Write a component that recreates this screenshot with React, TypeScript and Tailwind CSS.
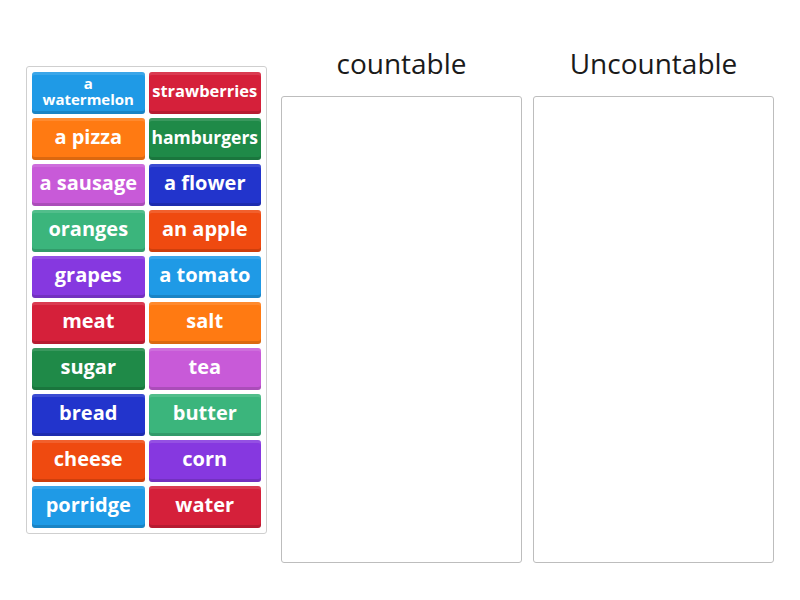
import React from "react";

type Tile = { t: string; c: string; s?: string };

const C = {
  blue: "bg-[#1f9ae6]",
  red: "bg-[#d5203a]",
  orange: "bg-[#ff7a12]",
  green: "bg-[#1f8a48]",
  pink: "bg-[#c85ad8]",
  navy: "bg-[#2234cc]",
  teal: "bg-[#3bb57c]",
  orangeRed: "bg-[#ef4a10]",
  purple: "bg-[#8638e0]",
};

const tiles: Tile[] = [
  { t: "a\nwatermelon", c: C.blue, s: "text-[15px] leading-[16px] whitespace-pre-line" },
  { t: "strawberries", c: C.red, s: "text-[16.5px] leading-[20px]" },
  { t: "a pizza", c: C.orange },
  { t: "hamburgers", c: C.green, s: "text-[17.5px] leading-[20px]" },
  { t: "a sausage", c: C.pink },
  { t: "a flower", c: C.navy },
  { t: "oranges", c: C.teal },
  { t: "an apple", c: C.orangeRed },
  { t: "grapes", c: C.purple },
  { t: "a tomato", c: C.blue },
  { t: "meat", c: C.red },
  { t: "salt", c: C.orange },
  { t: "sugar", c: C.green },
  { t: "tea", c: C.pink },
  { t: "bread", c: C.navy },
  { t: "butter", c: C.teal },
  { t: "cheese", c: C.orangeRed },
  { t: "corn", c: C.purple },
  { t: "porridge", c: C.blue },
  { t: "water", c: C.red },
];

export default function App() {
  return (
    <div
      className="w-[800px] h-[600px] bg-white flex items-start"
      style={{ fontFamily: '"Open Sans", "Noto Sans", sans-serif' }}
    >
      <div className="ml-[26px] mt-[66px] w-[241px] h-[468px] border border-[#cfcfcf] rounded-[3px] p-[5px]">
        <div className="grid grid-cols-2 gap-[4px]">
          {tiles.map((x) => (
            <div
              key={x.t}
              className={`${x.c} h-[42px] pb-[4px] rounded-[3px] flex items-center justify-center text-center text-white font-bold shadow-[inset_0_-3px_0_rgba(0,0,0,0.14),inset_0_3px_0_rgba(255,255,255,0.12)] ${x.s ?? "text-[20px] leading-[24px]"}`}
            >
              {x.t}
            </div>
          ))}
        </div>
      </div>
      <div className="ml-[14px] mt-[39px] flex gap-[11px]">
        {["countable", "Uncountable"].map((h) => (
          <div key={h} className="w-[241px] flex flex-col">
            <div className="h-[48px] flex items-center justify-center text-[28px] text-[#1a1a1a]">
              {h}
            </div>
            <div className="mt-[9px] h-[467px] border border-[#bdbdbd] rounded-[3px]" />
          </div>
        ))}
      </div>
    </div>
  );
}
